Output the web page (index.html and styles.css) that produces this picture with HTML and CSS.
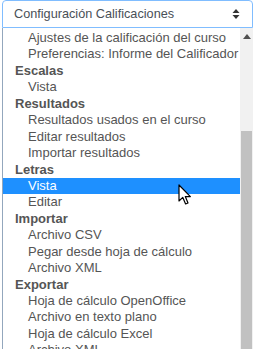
FILE: index.html
```html
<!DOCTYPE html>
<html lang="es">
<head>
  <meta charset="UTF-8">
  <title>Configuración Calificaciones</title>
  <link rel="stylesheet" href="styles.css">
</head>
<body>
  <div class="select">
    <span class="select-label">Configuración Calificaciones</span>
    <svg class="select-arrow" width="8" height="12" viewBox="0 0 8 12">
      <path d="M4 1 L7.5 5 L0.5 5 Z M4 11 L7.5 7 L0.5 7 Z" fill="#333"/>
    </svg>
  </div>
  <div class="listbox">
    <div class="options">
      <div class="opt">Ajustes de la calificación del curso</div>
      <div class="opt">Preferencias: Informe del Calificador</div>
      <div class="group">Escalas</div>
      <div class="opt">Vista</div>
      <div class="group">Resultados</div>
      <div class="opt">Resultados usados en el curso</div>
      <div class="opt">Editar resultados</div>
      <div class="opt">Importar resultados</div>
      <div class="group">Letras</div>
      <div class="opt selected">Vista</div>
      <div class="opt">Editar</div>
      <div class="group">Importar</div>
      <div class="opt">Archivo CSV</div>
      <div class="opt">Pegar desde hoja de cálculo</div>
      <div class="opt">Archivo XML</div>
      <div class="group">Exportar</div>
      <div class="opt">Hoja de cálculo OpenOffice</div>
      <div class="opt">Archivo en texto plano</div>
      <div class="opt">Hoja de cálculo Excel</div>
      <div class="opt">Archivo XML</div>
    </div>
    <div class="scrollbar">
      <div class="scroll-up">
        <svg width="8" height="5" viewBox="0 0 8 5"><path d="M4 0 L8 5 L0 5 Z" fill="#505050"/></svg>
      </div>
      <div class="thumb"></div>
    </div>
  </div>

  <svg class="cursor" width="14" height="22" viewBox="0 0 14 22">
    <path d="M1 1 L1 17 L4.8 13.4 L7.6 20 L10 19 L7.3 12.6 L12.4 12.6 Z" fill="#fff" stroke="#000" stroke-width="1.2" stroke-linejoin="round"/>
  </svg>
</body>
</html>
```

FILE: styles.css
```css
body {
  margin: 0;
  width: 253px;
  height: 349px;
  overflow: hidden;
  background-color: #fff;
  font-family: "Liberation Sans", Arial, sans-serif;
  font-size: 13px;
  position: relative;
}

.select {
  margin-left: 2px;
  height: 28px;
  box-sizing: border-box;
  border: 1px solid #80bdff;
  border-radius: 4px 4px 0 0;
  display: flex;
  align-items: center;
  padding: 0 12px 0 11px;
  color: #495057;
  font-size: 12.7px;
}

.select-label {
  flex: 1;
}

.listbox {
  margin-left: 2px;
  display: flex;
  height: 321px;
  border-left: 1px solid #93a7bd;
  box-sizing: border-box;
}

.options {
  flex: 1;
  padding-top: 2px;
  overflow: hidden;
}

.opt,
.group {
  height: 16.44px;
  line-height: 16.44px;
  white-space: nowrap;
  color: #555;
}

.opt {
  padding-left: 25px;
}

.group {
  padding-left: 12px;
  font-weight: bold;
}

.opt.selected {
  background-color: #1e90ff;
  color: #fff;
}

.scrollbar {
  width: 13px;
  background-color: #f1f1f1;
  display: flex;
  flex-direction: column;
  align-items: center;
}

.scroll-up {
  height: 17px;
  display: flex;
  align-items: center;
  justify-content: center;
  width: 100%;
}

.thumb {
  margin-top: 86px;
  width: 11px;
  flex: 1;
  background-color: #c1c1c1;
}

.cursor {
  position: absolute;
  left: 178px;
  top: 184px;
}
```
